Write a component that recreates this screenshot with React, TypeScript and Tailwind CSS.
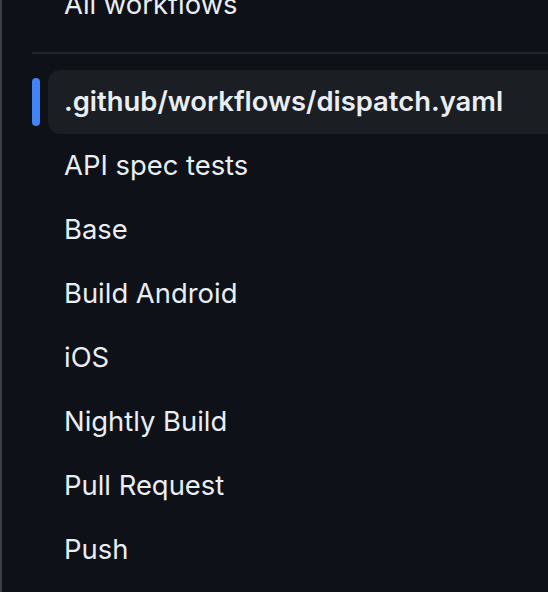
import React from "react";

const items = [
  "API spec tests",
  "Base",
  "Build Android",
  "iOS",
  "Nightly Build",
  "Pull Request",
  "Push",
];

export default function App() {
  return (
    <div
      className="w-[548px] h-[592px] overflow-hidden bg-[#0e1117] border-l-2 border-[#3a3f46] text-[#e9eef3]"
      style={{ fontFamily: "Inter, 'Noto Sans', sans-serif" }}
    >
      <div className="w-[600px] -mt-[27px] flex flex-col">
        <div className="h-[64px] flex items-center pl-[62px] text-[27.4px]">All workflows</div>
        <div className="ml-[30px] mt-[15px] h-[2px] bg-[#22262c]" />
        <div className="mt-[16px] flex items-center h-[64px]">
          <div className="ml-[30px] w-[8px] h-[48px] rounded-full bg-[#4184f5]" />
          <div className="ml-[8px] flex-1 h-[64px] rounded-[12px] bg-[#1b1e23] flex items-center pl-[16px] text-[27.4px] font-semibold">
            .github/workflows/dispatch.yaml
          </div>
        </div>
        {items.map((t) => (
          <div key={t} className="h-[64px] flex items-center pl-[62px] text-[27.4px]">
            {t}
          </div>
        ))}
      </div>
    </div>
  );
}
